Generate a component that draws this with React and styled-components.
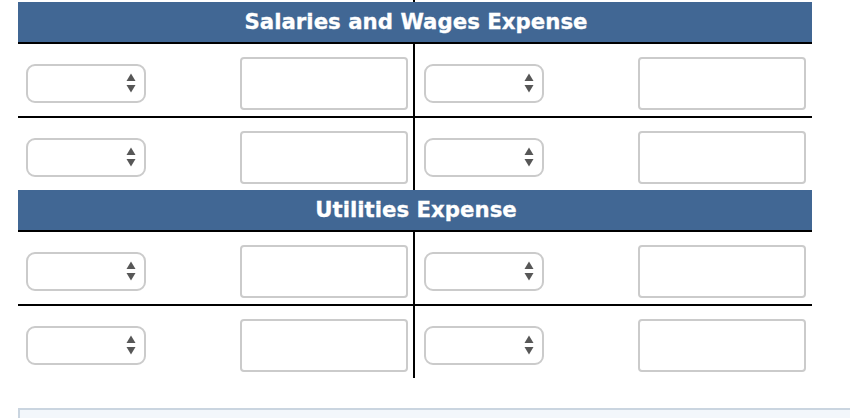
import React from "react";
import styled, { createGlobalStyle } from "styled-components";

const GlobalStyle = createGlobalStyle`
  html, body {
    margin: 0;
    padding: 0;
    background: #ffffff;
    overflow: hidden;
  }
  body {
    font-family: "DejaVu Sans", Verdana, sans-serif;
  }
`;

const Page = styled.div`
  width: 850px;
  height: 418px;
  padding-left: 18px;
  box-sizing: border-box;
  overflow: hidden;
`;

const Account = styled.div`
  width: 794px;
  display: flex;
  flex-direction: column;
`;

// little bit of the centre rule that pokes out above the first header
const Stem = styled.div`
  height: 2px;
  width: 2px;
  margin-left: 395px;
  background: #000;
`;

const Header = styled.div`
  height: 42px;
  border-bottom: 2px solid #000;
  background: #416794;
  color: #fff;
  font-family: "DejaVu Sans", Verdana, sans-serif;
  font-weight: bold;
  font-size: 21.3px;
  -webkit-text-stroke: 0.3px #fff;
  display: flex;
  align-items: center;
  justify-content: center;
  padding: 0 0 1px 2px;
  box-sizing: border-box;
`;

const Row = styled.div`
  height: ${(p) => (p.$ruled ? 74 : 72)}px;
  border-bottom: ${(p) => (p.$ruled ? "2px solid #000" : "none")};
  box-sizing: border-box;
  display: grid;
  grid-template-columns: 397px 397px;
`;

const Half = styled.div`
  display: flex;
  align-items: center;
  justify-content: space-between;
  padding: 6px ${(p) => (p.$right ? "6px" : "5px")} 0
    ${(p) => (p.$right ? "9px" : "8px")};
  border-right: ${(p) => (p.$right ? "none" : "2px solid #000")};
  box-sizing: border-box;
`;

const Picker = styled.div`
  width: 120px;
  height: 39px;
  border: 2px solid #cbcbcb;
  border-radius: 9px;
  background: #fff;
  box-sizing: border-box;
  display: flex;
  align-items: center;
  justify-content: flex-end;
  padding-right: 8px;
`;

const Amount = styled.input`
  appearance: none;
  width: 168px;
  height: 53px;
  margin: 0;
  border: 2px solid #cbcbcb;
  border-radius: 4px;
  background: #fff;
  box-sizing: border-box;
  outline: none;
`;

const Notes = styled.div`
  margin-top: 30px;
  width: 850px;
  height: 40px;
  border: 2px solid #cad5e0;
  background: #f3f7fb;
  box-sizing: border-box;
`;

const Updown = () => (
  <svg width="10" height="20" viewBox="0 0 10 20">
    <polygon points="5,0.5 9.5,8 0.5,8" fill="#575757" />
    <polygon points="0.5,12 9.5,12 5,19.5" fill="#575757" />
  </svg>
);

const Entry = ({ right }) => (
  <Half $right={right}>
    <Picker>
      <Updown />
    </Picker>
    <Amount type="text" />
  </Half>
);

const Line = ({ ruled }) => (
  <Row $ruled={ruled}>
    <Entry />
    <Entry right />
  </Row>
);

const accounts = ["Salaries and Wages Expense", "Utilities Expense"];

export default function App() {
  return (
    <Page>
      <GlobalStyle />
      <Account>
        <Stem />
        {accounts.map((name) => (
          <React.Fragment key={name}>
            <Header>{name}</Header>
            <Line ruled />
            <Line />
          </React.Fragment>
        ))}
      </Account>
      <Notes />
    </Page>
  );
}
